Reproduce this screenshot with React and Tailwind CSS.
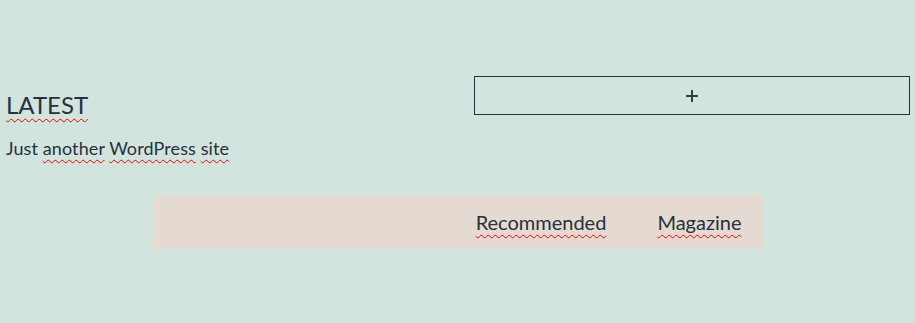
export default function App() {
  const squiggle =
    "underline decoration-wavy decoration-[#ff0000] decoration-1 underline-offset-[4px]";

  return (
    <div className="min-h-[323px] bg-[#d1e4dd] text-[#28303d] font-['Lato',sans-serif]">
      <header className="flex justify-between pl-[6px] pr-[5px] pt-[76px]">
        <div className="mt-[13px]">
          <p className="text-[24px] leading-[31px] uppercase">
            <span className={squiggle}>Latest</span>
          </p>
          <p className="mt-[16px] text-[18px] leading-[25px] tracking-[0.1px]">
            Just <span className={squiggle}>another</span>{" "}
            <span className={squiggle}>WordPress</span>{" "}
            <span className={squiggle}>site</span>
          </p>
        </div>
        <button
          type="button"
          className="flex h-[39px] w-[436px] items-center justify-center border border-[#28303d]"
        >
          <svg width="12" height="12" viewBox="0 0 12 12" className="text-[#3a3a3a]">
            <path d="M6 0v12M0 6h12" stroke="currentColor" strokeWidth="2" />
          </svg>
        </button>
      </header>
      <nav className="mx-auto mt-[34px] flex h-[54px] w-[610px] items-center justify-end gap-[51px] bg-[#e4dad1] pr-[21px] text-[20px]">
        <span className={squiggle}>Recommended</span>
        <span className={squiggle}>Magazine</span>
      </nav>
    </div>
  );
}
